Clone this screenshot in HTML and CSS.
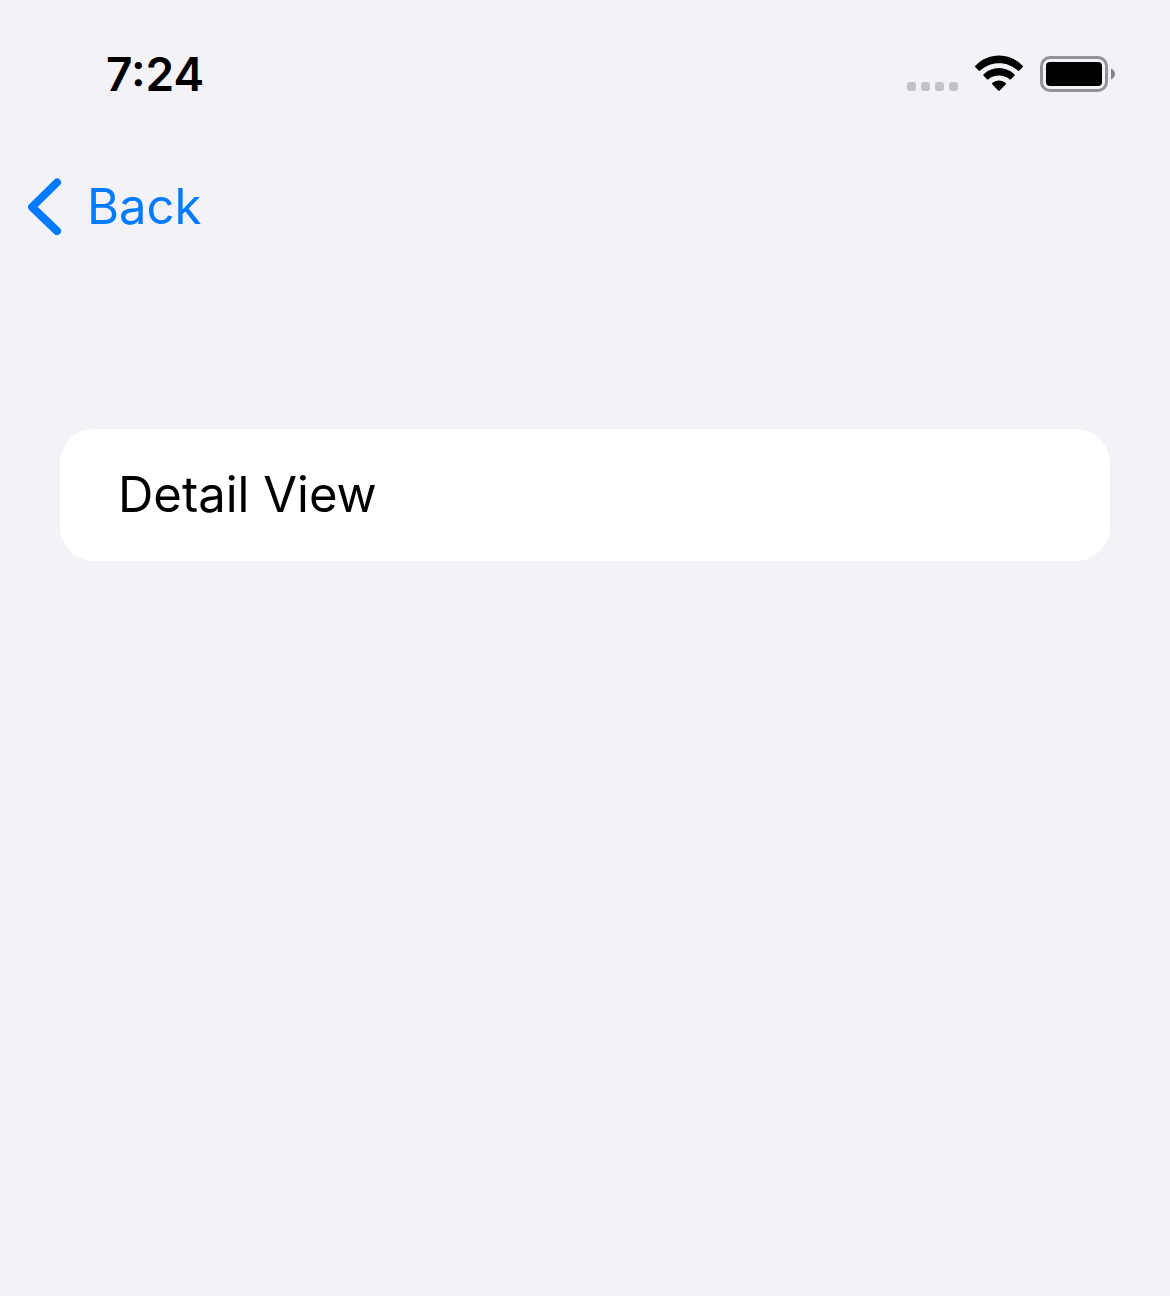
FILE: index.html
```html
<!DOCTYPE html>
<html lang="en">
<head>
    <meta charset="UTF-8">
    <meta name="viewport" content="width=device-width, initial-scale=1.0">
    <title>Detail View</title>
    <link rel="stylesheet" href="styles.css">
</head>
<body>
    <!-- Status bar -->
    <header class="status-bar">
        <time class="status-time">7:24</time>
        <div class="status-icons">
            <svg class="signal" width="51" height="36" viewBox="0 0 51 36" aria-hidden="true">
                <rect x="0" y="26" width="9" height="9" rx="3"/>
                <rect x="14" y="26" width="9" height="9" rx="3"/>
                <rect x="28" y="26" width="9" height="9" rx="3"/>
                <rect x="42" y="26" width="9" height="9" rx="3"/>
            </svg>
            <svg class="wifi" width="48" height="38" viewBox="0 0 48 38" aria-hidden="true">
                <path d="M0.4 12.3 Q-0.3 11.4 0.4 10.7 C6.8 4 15 0.4 24 0.4 S41.2 4 47.6 10.7 Q48.3 11.4 47.6 12.3 L44.3 15.6 Q43.6 16.2 42.8 15.5 C37.6 10.8 31.3 8.2 24 8.2 S10.4 10.8 5.2 15.5 Q4.4 16.2 3.7 15.6 Z"/>
                <path d="M8.6 20.8 Q7.9 20 8.7 19.2 C12.8 15.3 18 13 24 13 S35.2 15.3 39.3 19.2 Q40.1 20 39.4 20.8 L36 24.2 Q35.3 24.9 34.5 24.2 C31.6 21.9 28.2 20.6 24 20.6 S16.4 21.9 13.5 24.2 Q12.7 24.9 12 24.2 Z"/>
                <path d="M17.2 29.3 Q16.5 28.6 17.3 27.9 C19.2 26.3 21.4 25.4 24 25.4 S28.8 26.3 30.7 27.9 Q31.5 28.6 30.8 29.3 L24.8 35.5 Q24 36.3 23.2 35.5 Z"/>
            </svg>
            <svg class="battery" width="75" height="36" viewBox="0 0 75 36" aria-hidden="true">
                <rect class="battery-outline" x="1.5" y="1.5" width="65" height="33" rx="8.5"/>
                <rect x="6" y="6" width="56" height="24" rx="4"/>
                <path class="battery-cap" d="M71 12.5 C73.4 13.5 75 15.5 75 18 S73.4 22.5 71 23.5 Z"/>
            </svg>
        </div>
    </header>

    <!-- Navigation -->
    <nav class="nav-bar">
        <button class="back-button" type="button">
            <svg class="chevron" width="34" height="58" viewBox="0 0 34 58" aria-hidden="true">
                <path d="M29 4.5 L4 29 L29 53"/>
            </svg>
            Back
        </button>
    </nav>

    <!-- Content -->
    <main class="content">
        <ul class="list">
            <li class="list-row">Detail View</li>
        </ul>
    </main>
</body>
</html>
```

FILE: styles.css
```css
* {
    box-sizing: border-box;
}

body {
    margin: 0;
    min-height: 100vh;
    background: #f2f2f7;
    color: #000;
    font-family: Inter, "Liberation Sans", sans-serif;
    font-size: 49px;
    line-height: 60px;
}

/* Status bar */
.status-bar {
    display: flex;
    align-items: center;
    justify-content: space-between;
    height: 148px;
    padding: 0 55px 0 106px;
}

.status-time {
    font-size: 46px;
    font-weight: 600;
}

.status-icons {
    display: flex;
    align-items: center;
    gap: 17px;
}

.signal {
    fill: #c2c1c6;
}

.battery-outline {
    fill: none;
    stroke: #929297;
    stroke-width: 3;
}

.battery-cap {
    fill: #858589;
}

/* Navigation */
.nav-bar {
    display: flex;
    align-items: center;
    height: 118px;
    padding: 0 28px;
}

.back-button {
    display: flex;
    align-items: center;
    gap: 25px;
    padding: 0;
    border: none;
    background: none;
    color: #007aff;
    font: inherit;
    cursor: pointer;
}

.chevron {
    fill: none;
    stroke: currentColor;
    stroke-width: 8;
    stroke-linecap: round;
    stroke-linejoin: round;
}

/* Content */
.content {
    padding: 163px 60px 60px;
}

.list {
    margin: 0;
    padding: 0;
    list-style: none;
    background: #fff;
    border-radius: 34px;
}

.list-row {
    padding: 36px 58px;
}
```
